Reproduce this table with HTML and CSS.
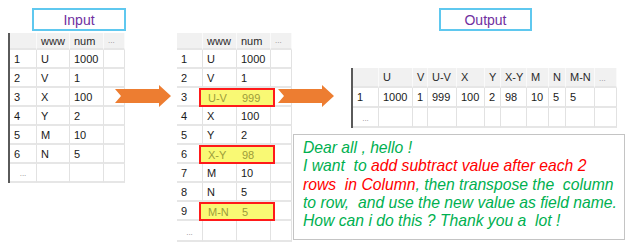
FILE: index.html
```html
<!DOCTYPE html>
<html>
<head>
<meta charset="utf-8">
<link rel="stylesheet" href="styles.css">
</head>
<body>
<div class="page">
  <div class="col-in">
    <div class="label label-in">Input</div>
    <div class="tbl t-in">
      <div class="c h"></div><div class="c h">www</div><div class="c h">num</div><div class="c h dots"><span>...</span></div>
      <div class="c">1</div><div class="c">U</div><div class="c">1000</div><div class="c"></div>
      <div class="c">2</div><div class="c">V</div><div class="c">1</div><div class="c"></div>
      <div class="c">3</div><div class="c">X</div><div class="c">100</div><div class="c"></div>
      <div class="c">4</div><div class="c">Y</div><div class="c">2</div><div class="c"></div>
      <div class="c">5</div><div class="c">M</div><div class="c">10</div><div class="c"></div>
      <div class="c">6</div><div class="c">N</div><div class="c">5</div><div class="c"></div>
      <div class="c dots mid"><span>...</span></div><div class="c"></div><div class="c"></div><div class="c"></div>
    </div>
  </div>

  <div class="col-mid">
    <div class="tbl t-mid">
      <div class="c h"></div><div class="c h">www</div><div class="c h">num</div><div class="c h dots"><span>...</span></div>
      <div class="c">1</div><div class="c">U</div><div class="c">1000</div><div class="c"></div>
      <div class="c">2</div><div class="c">V</div><div class="c">1</div><div class="c"></div>
      <div class="c">3</div><div class="hl"><span>U-V</span><span>999</span></div><div class="c"></div>
      <div class="c">4</div><div class="c">X</div><div class="c">100</div><div class="c"></div>
      <div class="c">5</div><div class="c">Y</div><div class="c">2</div><div class="c"></div>
      <div class="c">6</div><div class="hl"><span>X-Y</span><span>98</span></div><div class="c"></div>
      <div class="c">7</div><div class="c">M</div><div class="c">10</div><div class="c"></div>
      <div class="c">8</div><div class="c">N</div><div class="c">5</div><div class="c"></div>
      <div class="c">9</div><div class="hl"><span>M-N</span><span>5</span></div><div class="c"></div>
      <div class="c dots mid"><span>...</span></div><div class="c"></div><div class="c"></div><div class="c"></div>
    </div>
  </div>

  <div class="col-right">
    <div class="label label-out">Output</div>
    <div class="tbl t-out">
      <div class="c h"></div><div class="c h">U</div><div class="c h">V</div><div class="c h">U-V</div><div class="c h">X</div><div class="c h">Y</div><div class="c h">X-Y</div><div class="c h">M</div><div class="c h">N</div><div class="c h">M-N</div><div class="c h dots"><span>...</span></div>
      <div class="c">1</div><div class="c">1000</div><div class="c">1</div><div class="c">999</div><div class="c">100</div><div class="c">2</div><div class="c">98</div><div class="c">10</div><div class="c">5</div><div class="c">5</div><div class="c"></div>
      <div class="c dots mid"><span>...</span></div><div class="c"></div><div class="c"></div><div class="c"></div><div class="c"></div><div class="c"></div><div class="c"></div><div class="c"></div><div class="c"></div><div class="c"></div><div class="c"></div>
    </div>
    <div class="note"><span class="g">Dear all , hello !</span>
<span class="g">I want  to </span><span class="r">add subtract value after each 2</span>
<span class="r">rows  in Column</span><span class="g">, then transpose the  column</span>
<span class="g">to row,  and use the new value as field name.</span>
<span class="g">How can i do this ? Thank you a  lot !</span></div>
  </div>

  <svg class="arrow arrow1" width="56" height="22" viewBox="0 0 56 22"><polygon points="0,4 44,4 44,0 56,11 44,22 44,18 0,18 6,11" fill="#ed7d31"/></svg>
  <svg class="arrow arrow2" width="56" height="22" viewBox="0 0 56 22"><polygon points="0,4 44,4 44,0 56,11 44,22 44,18 0,18 6,11" fill="#ed7d31"/></svg>
</div>
</body>
</html>
```

FILE: styles.css
```css
html, body {
  margin: 0;
  padding: 0;
  background: #ffffff;
}
body {
  width: 635px;
  height: 248px;
  overflow: hidden;
  font-family: "Liberation Sans", Arial, sans-serif;
}
.page {
  position: relative;
  display: flex;
  align-items: flex-start;
  height: 248px;
}
.label {
  box-sizing: border-box;
  height: 23px;
  border: 2px solid #5fc8ef;
  display: flex;
  align-items: center;
  justify-content: center;
  font-size: 14px;
  color: #7030a0;
}
.col-in {
  margin-left: 8px;
  width: 118px;
  display: flex;
  flex-direction: column;
}
.label-in {
  margin: 8px 0 0 24px;
  width: 94px;
}
.t-in {
  margin-top: 2px;
  border-left: 2px solid #5a5a5a;
  grid-template-columns: 27px 33px 34px 21px;
  grid-template-rows: 17px repeat(7, 19px);
}
.col-mid {
  margin-left: 51px;
  padding-top: 33px;
}
.t-mid {
  grid-template-columns: 26px 34px 34px 21px;
  grid-template-rows: 17px repeat(9, 19px) 21px;
}
.col-right {
  margin-left: 1px;
  width: 332px;
  display: flex;
  flex-direction: column;
  align-items: flex-start;
}
.label-out {
  margin: 8px 0 0 146px;
  width: 93px;
}
.t-out {
  margin: 37px 0 0 58px;
  border-left: 2px solid #5a5a5a;
  grid-template-columns: 26px 34px 15px 29px 28px 16px 26px 22px 17px 29px 22px;
  grid-template-rows: 20px 20px 20px;
}
.tbl {
  display: grid;
}
.c {
  box-sizing: border-box;
  border-bottom: 2px solid #e6e6e6;
  border-right: 1px solid #e2e2e2;
  padding-left: 4px;
  display: flex;
  align-items: center;
  font-size: 11px;
  color: #1a1a1a;
  white-space: nowrap;
  overflow: hidden;
}
.h {
  background: #f1f1f1;
  color: #2a2a2a;
  border-right-color: #fafafa;
}
.dots {
  align-items: flex-end;
  padding-bottom: 3px;
  font-size: 8px;
  color: #8a8a8a;
}
.dots.mid {
  justify-content: center;
  padding-left: 0;
}
.hl {
  grid-column: 2 / 4;
  margin: 0 -4px;
  position: relative;
  z-index: 1;
  box-sizing: border-box;
  border: 2px solid #ff1a1a;
  background: #f9f974;
  display: grid;
  grid-template-columns: 41px 1fr;
  align-items: center;
  font-size: 11px;
  color: #9c9c3a;
}
.hl span:first-child {
  padding-left: 7px;
}
.note {
  margin-top: 6px;
  box-sizing: border-box;
  width: 332px;
  height: 106px;
  border: 1px solid #c4c4c4;
  padding: 4px 0 0 9px;
  font-size: 15.7px;
  font-style: italic;
  line-height: 18.3px;
  white-space: pre;
}
.g { color: #00b050; }
.r { color: #ff0000; }
.arrow {
  position: absolute;
  top: 85px;
}
.arrow1 { left: 115px; }
.arrow2 { left: 278px; }
```
